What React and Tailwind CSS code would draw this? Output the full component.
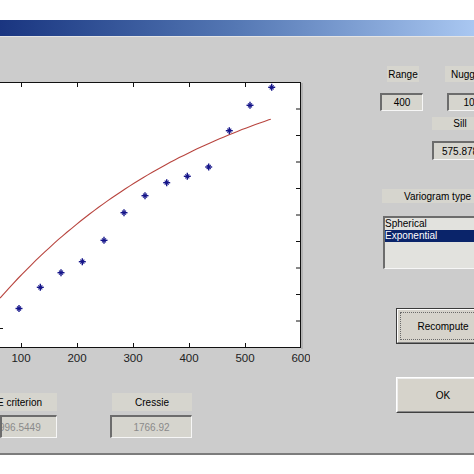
import React from "react";

const OY = 78;
const stars = [
  [19, 308.5], [40.3, 287.3], [61, 272.7], [82.3, 261.7], [104, 240.3], [124, 212.7],
  [145, 195.7], [166.7, 182.7], [187.3, 176.3], [208.7, 167], [229.3, 130.7], [250, 105.3], [271.7, 87.3],
];

function curvePath() {
  const pts = [];
  for (let h = 62.5; h <= 546; h += 8) {
    const x = -35 + 0.56 * h;
    const y = 341.3 - 298.3 * (1 - Math.exp(-h / 400));
    pts.push([x, y - OY]);
  }
  pts.push([-35 + 0.56 * 546, 341.3 - 298.3 * (1 - Math.exp(-546 / 400)) - OY]);
  return "M" + pts.map((p) => p[0].toFixed(1) + "," + p[1].toFixed(1)).join(" L");
}

function Plot() {
  const xt = [21, 77, 133, 189, 245];
  const labels = [[21, "100"], [77, "200"], [133, "300"], [189, "400"], [245, "500"], [301, "600"]];
  const yt = [];
  for (let k = 1; k <= 9; k++) yt.push(347.5 - 26.5 * k);
  return (
    <svg width="310" height="290" viewBox="0 0 310 290" className="block">
      <rect x="-5" y={82.5 - OY} width="305.5" height="265" fill="#ffffff" stroke="#111" strokeWidth="1" />
      <line x1="302" y1={83 - OY} x2="302" y2={349 - OY} stroke="#9a9a9a" strokeWidth="1" />
      {xt.map((x) => (
        <g key={x}>
          <line x1={x + 0.5} y1={83 - OY} x2={x + 0.5} y2={87 - OY} stroke="#111" />
          <line x1={x + 0.5} y1={347 - OY} x2={x + 0.5} y2={343 - OY} stroke="#111" />
        </g>
      ))}
      {yt.map((y) => (
        <line key={y} x1="300" y1={y - OY} x2="296" y2={y - OY} stroke="#111" />
      ))}
      <line x1="0" y1={328.5 - OY} x2="3" y2={328.5 - OY} stroke="#111" />
      <path d={curvePath()} fill="none" stroke="#b8453f" strokeWidth="1.1" />
      {stars.map(([x, y], i) => (
        <g key={i} stroke="#16168a" strokeWidth="1.4">
          <line x1={x - 3.5} y1={y - OY} x2={x + 3.5} y2={y - OY} />
          <line x1={x} y1={y - OY - 3.5} x2={x} y2={y - OY + 3.5} />
          <line x1={x - 2} y1={y - OY - 2} x2={x + 2} y2={y - OY + 2} strokeWidth="1.1" />
          <line x1={x - 2} y1={y - OY + 2} x2={x + 2} y2={y - OY - 2} strokeWidth="1.1" />
        </g>
      ))}
      {labels.map(([x, t]) => (
        <text key={t} x={x} y={361.5 - OY} textAnchor="middle" fontSize="11.5" fill="#222" fontFamily="Liberation Sans, Arial, sans-serif">
          {t}
        </text>
      ))}
    </svg>
  );
}

const labelBox = "shrink-0 bg-[#d6d5ce] flex items-center justify-center whitespace-nowrap";
const edit = "shrink-0 bg-[#d6d5ce] border-t-2 border-l-2 border-b border-r border-t-[#6c6c6c] border-l-[#6c6c6c] border-b-[#f6f6f6] border-r-[#f6f6f6] flex items-center whitespace-nowrap overflow-hidden";

export default function App() {
  return (
    <div className="w-[474px] h-[474px] bg-white overflow-hidden flex flex-col font-['Liberation_Sans',Arial,sans-serif] text-[10px] text-black">
      <div className="h-[20px] shrink-0" />
      <div className="h-[16px] shrink-0 bg-linear-to-r from-[#1a3580] via-[#5578b4] to-[#a9c7f1]" />
      <div className="h-[419px] shrink-0 bg-[#cccccc] border-t border-t-[#e4e4e4] border-b-2 border-b-[#7c7c7c] flex">
        <div className="w-[380px] shrink-0 flex flex-col">
          <div className="mt-[41px]">
            <Plot />
          </div>
          <div className="mt-[25px] flex">
            <div className={labelBox + " w-[57px] h-[18px] justify-start"}>
              <span className="ml-[-3px]">E criterion</span>
            </div>
            <div className={labelBox + " w-[80px] h-[18px] ml-[55px]"}>Cressie</div>
          </div>
          <div className="mt-[4px] flex">
            <div className={edit + " w-[57px] h-[23px] text-[#8a8a8a]"}>
              <span className="ml-[-3px]">996.5449</span>
            </div>
            <div className={edit + " w-[82px] h-[23px] ml-[53px] justify-center text-[#8a8a8a]"}>1766.92</div>
          </div>
        </div>
        <div className="w-[160px] shrink-0 flex flex-col">
          <div className="mt-[29px] flex">
            <div className={labelBox + " w-[32px] h-[16px] ml-[7px]"}>Range</div>
            <div className={labelBox + " w-[55px] h-[16px] ml-[26px] justify-start pl-[6px]"}>Nugget</div>
          </div>
          <div className="mt-[11px] flex">
            <div className={edit + " w-[43px] h-[18px] justify-center"}>400</div>
            <div className={edit + " w-[43px] h-[18px] ml-[24px] justify-center"}>10</div>
          </div>
          <div className={labelBox + " mt-[6px] ml-[52px] w-[56px] h-[13px]"}>Sill</div>
          <div className={edit + " mt-[11px] ml-[52px] w-[60px] h-[19px] pl-[8px]"}>575.8786</div>
          <div className={labelBox + " mt-[29px] ml-[2px] w-[111px] h-[14px]"}>Variogram type</div>
          <div className="mt-[13px] ml-[3px] w-[110px] h-[53px] shrink-0 bg-[#e2e2de] border-t-2 border-l-2 border-b border-r border-t-[#6c6c6c] border-l-[#6c6c6c] border-b-[#f6f6f6] border-r-[#f6f6f6] flex flex-col">
            <div className="h-[12px] leading-[12px]">Spherical</div>
            <div className="h-[12px] leading-[12px] bg-[#0a246a] text-white">Exponential</div>
          </div>
          <div className="mt-[39px] ml-[16px] w-[94px] h-[36px] shrink-0 border border-[#3a3a3a] bg-[#d6d3cb]">
            <div className="w-full h-full border border-t-white border-l-white border-b-[#808080] border-r-[#808080] p-[2px]">
              <div className="w-full h-full border border-dotted border-[#6a6a6a] flex items-center justify-center">
                Recompute
              </div>
            </div>
          </div>
          <div className="mt-[33px] ml-[16px] w-[94px] h-[36px] shrink-0 bg-[#d6d3cb] border border-t-white border-l-white border-b-[#404040] border-r-[#404040]">
            <div className="w-full h-full border border-t-[#eeeeee] border-l-[#eeeeee] border-b-[#8a8a8a] border-r-[#8a8a8a] flex items-center justify-center">
              OK
            </div>
          </div>
        </div>
      </div>
    </div>
  );
}
